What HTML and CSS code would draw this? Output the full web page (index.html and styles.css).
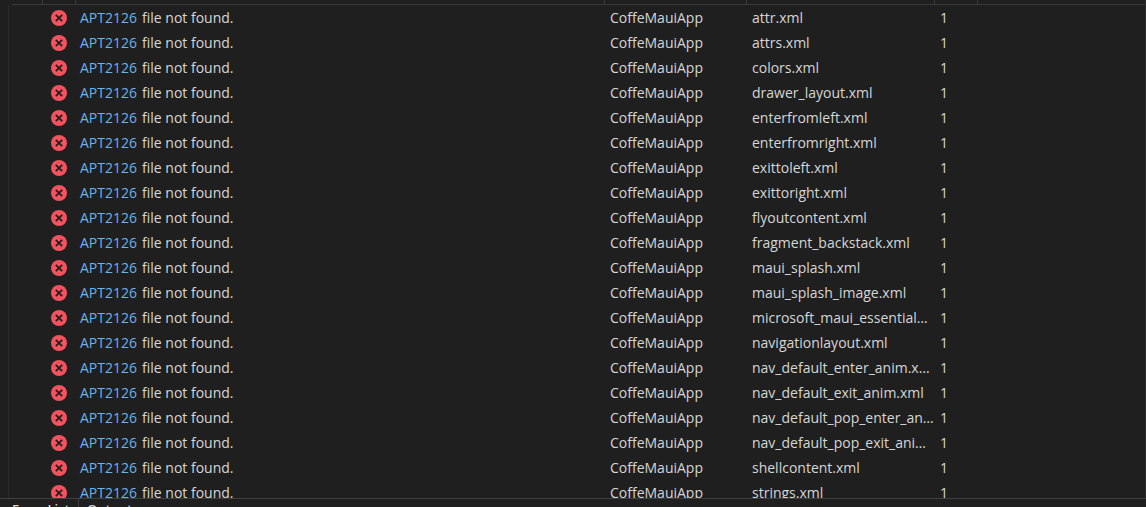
FILE: index.html
```html
<!DOCTYPE html>
<html lang="en">
<head>
<meta charset="utf-8">
<title>Error List</title>
<link rel="stylesheet" href="styles.css">
</head>
<body>
<div class="list">
  <div class="head">
    <span class="hc c-sel"></span><span class="hc c-ico"></span><span class="hc c-desc"></span><span class="hc c-proj"></span><span class="hc c-file"></span><span class="hc c-line"></span><span class="hc c-sup"></span>
  </div>
  <div class="rows" id="rows"></div>
</div>
<div class="tabs"><span class="tab-label">Error List</span><span class="tab-open">Output</span></div>
<script src="app.js"></script>
</body>
</html>
```
FILE: styles.css
```css
html, body { margin: 0; padding: 0; height: 100%; overflow: hidden; background: #1f1f1f; }
body { display: flex; flex-direction: column; font-family: "Open Sans", "Noto Sans", sans-serif; font-size: 14px; color: #d6d6d6; }
.list { height: 499px; overflow: hidden; border-right: 1px solid #2b2b2b; margin-left: 0; display: flex; flex-direction: column; }
.head { height: 4px; flex: none; display: flex; border-bottom: 1px solid #3a3a3a; margin-left: 12px; }
.hc { display: block; border-right: 1px solid #3a3a3a; flex: none; }
.c-sel { width: 30px; }
.c-ico { width: 32px; }
.c-desc { width: 528px; }
.c-proj { width: 141px; }
.c-file { width: 187px; }
.c-line { width: 42px; }
.c-sup { width: 168px; border-right: 1px solid #3a3a3a; }
.rows { flex: 1; overflow: hidden; margin-left: 8px; border-left: 1px solid #2b2b2b; }
.row { height: 25px; display: flex; align-items: center; white-space: nowrap; }
.ico { width: 18px; height: 18px; flex: none; margin-left: 41px; }
.desc { width: 530px; margin-left: 12px; flex: none; }
.code { color: #6cb2eb; margin-right: 5px; }
.proj { width: 142px; flex: none; }
.file { width: 182px; flex: none; overflow: hidden; text-overflow: ellipsis; }
.line { margin-left: 6px; }
.tabs { flex: none; height: 8px; overflow: hidden; border-top: 1px solid #3f3f3f; display: flex; font-size: 13px; font-weight: 600; line-height: 20px; }
.tab-label { width: 78px; padding: 0 0 0 12px; box-sizing: border-box; margin-top: 0; }
.tab-open { border-left: 1px solid #3f3f3f; padding-left: 8px; }
```
FILE: app.js
```js
const files = ["attr.xml","attrs.xml","colors.xml","drawer_layout.xml","enterfromleft.xml","enterfromright.xml","exittoleft.xml","exittoright.xml","flyoutcontent.xml","fragment_backstack.xml","maui_splash.xml","maui_splash_image.xml","microsoft_maui_essentials_file_paths.xml","navigationlayout.xml","nav_default_enter_anim.xml","nav_default_exit_anim.xml","nav_default_pop_enter_anim.xml","nav_default_pop_exit_anim.xml","shellcontent.xml","strings.xml"];
const icon = '<svg class="ico" viewBox="0 0 18 18"><circle cx="9" cy="9" r="8" fill="#f4525f"/><path d="M5.8 5.8l6.4 6.4M12.2 5.8l-6.4 6.4" stroke="#1f1f1f" stroke-width="1.8" fill="none"/></svg>';
document.getElementById("rows").innerHTML = files.map(f =>
  `<div class="row">${icon}<div class="desc"><span class="code">APT2126</span>file not found.</div><div class="proj">CoffeMauiApp</div><div class="file">${f}</div><div class="line">1</div></div>`
).join("");
```
